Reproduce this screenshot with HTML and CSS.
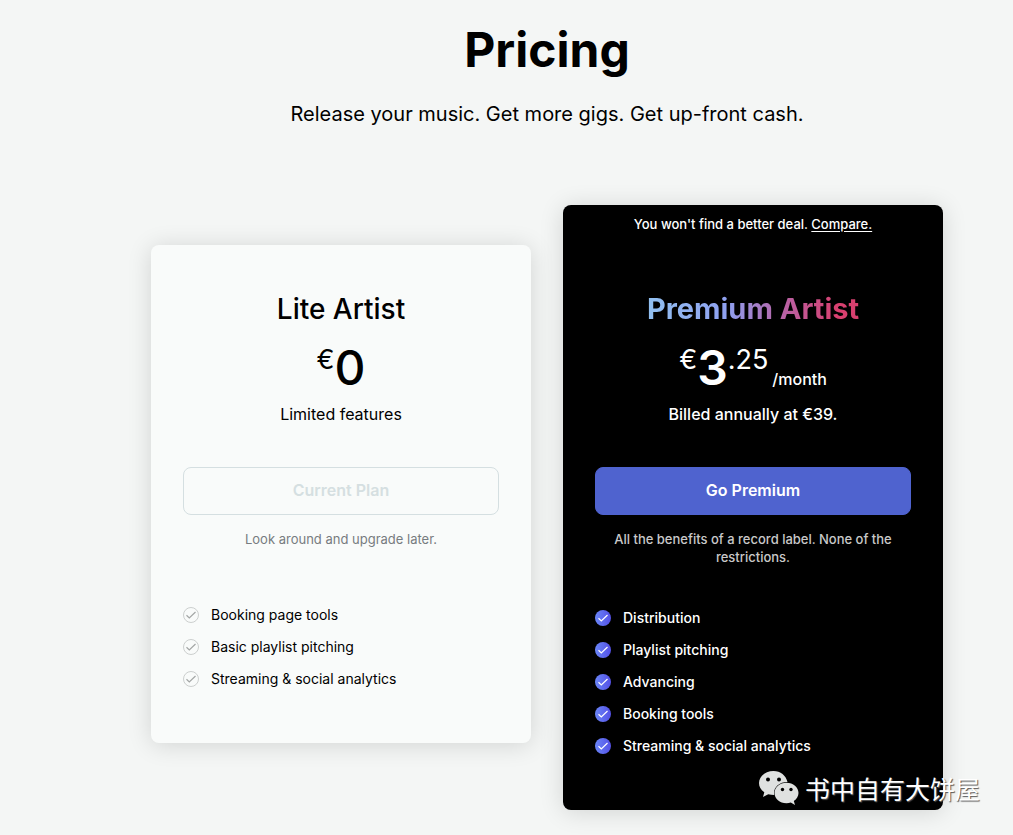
FILE: index.html
```html
<!DOCTYPE html>
<html lang="en">
<head>
<meta charset="utf-8">
<meta name="viewport" content="width=device-width, initial-scale=1">
<title>Pricing</title>
<link rel="stylesheet" href="styles.css">
</head>
<body>
<svg class="defs" width="0" height="0" aria-hidden="true">
  <defs>
    <linearGradient id="badge" x1="0" y1="0" x2="1" y2="0"><stop offset="0" stop-color="#6a86f8"/><stop offset="1" stop-color="#5450e6"/></linearGradient>
    <symbol id="check-lite" viewBox="0 0 16 16"><circle cx="8" cy="8" r="7.5" fill="none" stroke="#cccfce"/><path d="M3.500 8.300 6.300 11 12.500 5" fill="none" stroke="#a3a6a5" stroke-width="1.2"/></symbol>
    <symbol id="check-premium" viewBox="0 0 16 16"><circle cx="8" cy="8" r="8" fill="url(#badge)"/><path d="M3.500 8.300 6.300 11 12.500 5" fill="none" stroke="#fff" stroke-width="1.2"/></symbol>
  </defs>
</svg>
<main class="page">
  <header class="intro">
    <h1 class="heading">Pricing</h1>
    <p class="tagline">Release your music. Get more gigs. Get up-front cash.</p>
  </header>
  <div class="plans">
    <section class="card lite">
      <h2 class="plan-name">Lite Artist</h2>
      <p class="price"><span class="small">€</span><span class="amount">0</span></p>
      <p class="billing">Limited features</p>
      <button class="button" type="button" disabled>Current Plan</button>
      <p class="note">Look around and upgrade later.</p>
      <ul class="features">
        <li><svg class="check"><use href="#check-lite"/></svg>Booking page tools</li>
        <li><svg class="check"><use href="#check-lite"/></svg>Basic playlist pitching</li>
        <li><svg class="check"><use href="#check-lite"/></svg>Streaming &amp; social analytics</li>
      </ul>
    </section>
    <section class="card premium">
      <p class="deal">You won't find a better deal. <a href="#compare">Compare.</a></p>
      <h2 class="plan-name"><span class="gradient">Premium Artist</span></h2>
      <p class="price"><span class="small">€</span><span class="amount">3</span><span class="small">.25</span><span class="period">/month</span></p>
      <p class="billing">Billed annually at €39.</p>
      <button class="button" type="button">Go Premium</button>
      <p class="note">All the benefits of a record label. None of the restrictions.</p>
      <ul class="features">
        <li><svg class="check"><use href="#check-premium"/></svg>Distribution</li>
        <li><svg class="check"><use href="#check-premium"/></svg>Playlist pitching</li>
        <li><svg class="check"><use href="#check-premium"/></svg>Advancing</li>
        <li><svg class="check"><use href="#check-premium"/></svg>Booking tools</li>
        <li><svg class="check"><use href="#check-premium"/></svg>Streaming &amp; social analytics</li>
      </ul>
    </section>
  </div>
</main>
<div class="watermark" lang="zh">
  <svg class="wechat" viewBox="0 0 40 34" aria-hidden="true">
    <path fill="#dfe1e0" d="M14.500 0C6.500 0 0 5.300 0 12c0 3.800 2 7 5.300 9.300L4 26l5.200-2.800c2 .6 4 .8 6 .8C14 17 19.500 11 28.500 11 27 4.500 21.500 0 14.500 0Z"/>
    <path fill="#dfe1e0" d="M27.500 11.800c-6.800 0-12 4.600-12 10.200s5.200 10.200 12 10.200c1.500 0 3-.2 4.300-.6L36 34l-1.200-4c2.800-1.900 4.700-4.700 4.700-8 0-5.600-5.300-10.200-12-10.200Z"/>
    <circle cx="9" cy="8.500" r="2"/><circle cx="20" cy="8.500" r="2"/><circle cx="23.500" cy="18.500" r="1.700"/><circle cx="32" cy="18.500" r="1.700"/>
  </svg>
  <span>书中自有大饼屋</span>
</div>
</body>
</html>
```
FILE: styles.css
```css
* { box-sizing: border-box; }
body {
  position: relative;
  margin: 0;
  background: #f4f6f5;
  color: #000;
  font-family: Inter, "Liberation Sans", sans-serif;
}
h1, h2, p, ul { margin: 0; padding: 0; }
.defs { position: absolute; }
.page { padding: 20px 0 24px 81px; }
.intro { text-align: center; }
.heading { font-size: 48px; line-height: 60px; font-weight: 700; }
.tagline { margin-top: 20px; font-size: 20px; line-height: 28px; }
.plans {
  display: flex;
  justify-content: center;
  align-items: flex-start;
  gap: 32px;
  margin-top: 77px;
}
.card {
  flex: 0 1 380px;
  padding: 0 32px 54px;
  border-radius: 8px;
  text-align: center;
  box-shadow: 0 2px 24px rgba(0, 0, 0, 0.14);
}
.lite { margin-top: 40px; padding-top: 44px; background: #f9fbfa; }
.premium { background: #000; color: #fff; font-weight: 500; }
.deal { padding-top: 9px; margin-bottom: 55px; font-size: 13px; line-height: 20px; }
.deal a { color: inherit; text-underline-offset: 2px; }
.plan-name { font-size: 28px; line-height: 40px; font-weight: 500; }
.premium .plan-name { font-size: 29px; font-weight: 700; }
.gradient {
  background: linear-gradient(90deg, #91c0f0, #8fa0f0 38%, #b565aa 62%, #d8406f 90%);
  background-clip: text;
  -webkit-background-clip: text;
  color: transparent;
}
.price {
  display: flex;
  justify-content: center;
  align-items: flex-start;
  height: 60px;
  margin-top: 8px;
}
.amount { font-size: 48px; line-height: 62px; font-weight: 600; }
.lite .amount { font-weight: 500; }
.small { font-size: 27px; line-height: 46px; font-weight: 400; }
.period { align-self: flex-end; margin-left: 4px; font-size: 16px; line-height: 36px; }
.billing { margin-top: 5px; font-size: 16px; line-height: 24px; }
.button {
  display: block;
  width: 100%;
  height: 48px;
  margin-top: 41px;
  padding: 0 0 2px;
  border: 1px solid #d5dfe1;
  border-radius: 8px;
  background: transparent;
  color: #d5dfe1;
  font: 600 16px/24px Inter, "Liberation Sans", sans-serif;
}
.premium .button { border-color: #4f63cf; background: #4f63cf; color: #fff; }
.note { margin-top: 15px; font-size: 13px; line-height: 18px; color: #777c80; }
.premium .note { color: #c9c9c9; }
.features {
  display: grid;
  gap: 12px;
  margin-top: 57px;
  list-style: none;
  text-align: left;
  font-size: 14px;
  line-height: 20px;
}
.premium .features { margin-top: 42px; }
.features li { display: flex; align-items: center; gap: 12px; }
.check { flex: none; width: 16px; height: 16px; }
.watermark {
  position: absolute;
  right: 33px;
  bottom: 28px;
  display: flex;
  align-items: center;
  gap: 6px;
  color: #fff;
  font-family: "Noto Sans CJK SC", sans-serif;
  font-size: 25px;
  line-height: 36px;
  text-shadow: 1px 1px 1px #555;
}
.wechat { width: 40px; height: 34px; }
```
